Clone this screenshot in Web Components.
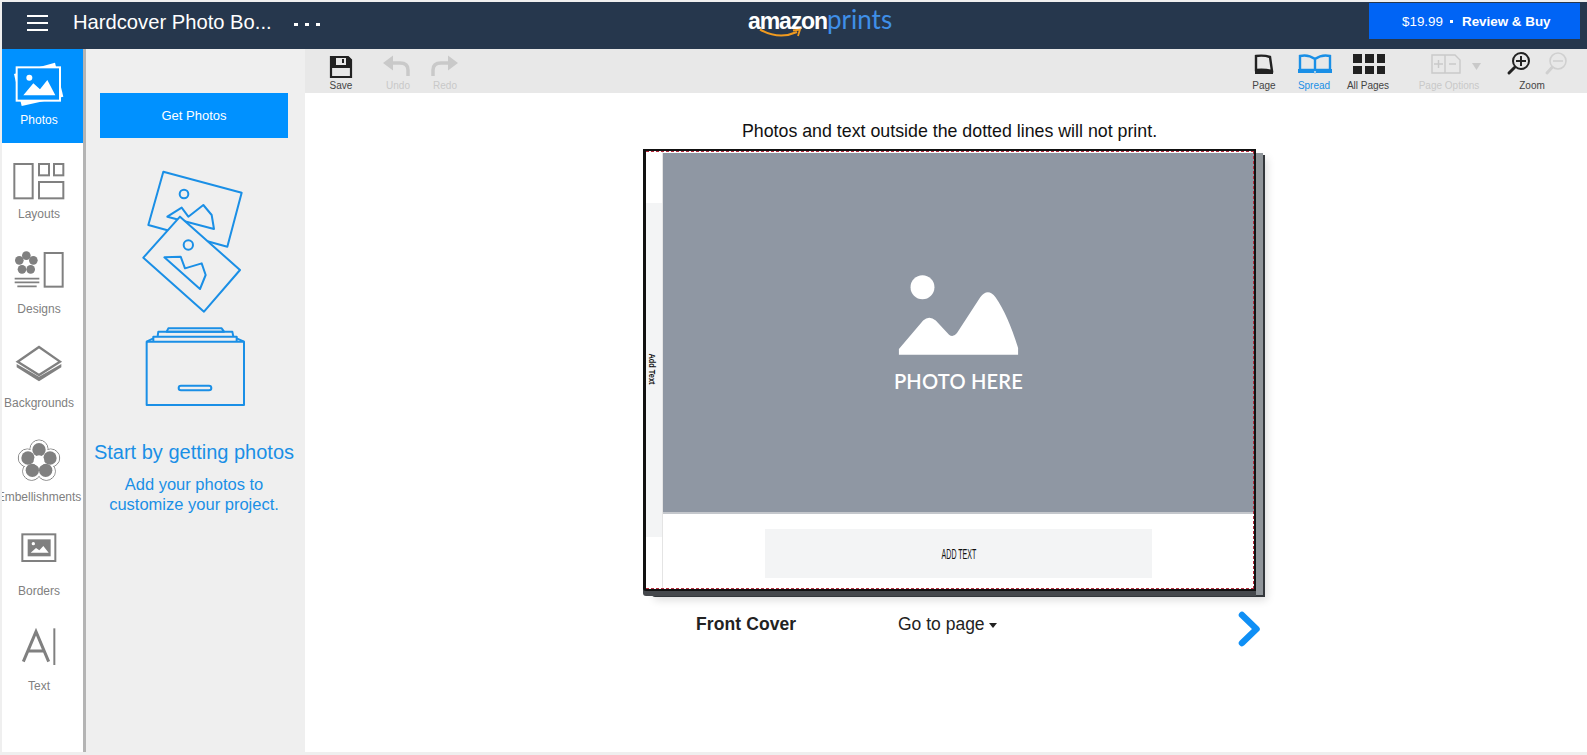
<!DOCTYPE html>
<html>
<head>
<meta charset="utf-8">
<title>Hardcover Photo Book</title>
<style>
  html, body { margin: 0; height: 100%; }
  body { background: #efefef; font-family: "Liberation Sans", Arial, sans-serif; overflow: hidden; }
</style>
</head>
<body>
<app-root></app-root>
<script>
const FONT = '"Liberation Sans", Arial, sans-serif';

class TopBar extends HTMLElement {
    constructor() {
        super();
        this.attachShadow({ mode: 'open' }).innerHTML = `
  <style>
    :host { display: flex; align-items: center; height: 47px; background: #26374d; color: #fff; font-family: ${FONT}; }
    .left { width: 746px; display: flex; align-items: center; flex: none; padding-bottom: 6px; }
    .burger { width: 21px; margin-left: 25px; display: grid; gap: 5px; }
    .burger i { display: block; height: 2px; background: #fff; }
    .title { margin-left: 25px; font-size: 20.2px; width: 200px; white-space: nowrap; }
    .dots { margin-left: 21px; margin-top: 4px; display: flex; gap: 7px; }
    .dots i { width: 4px; height: 3px; background: #fff; }
    .logo { position: relative; display: flex; align-items: baseline; height: 47px; width: 150px; }
    .amazon { font-weight: 700; font-size: 24px; letter-spacing: -1.2px; line-height: 34px; transform: scaleX(.96); transform-origin: left; width: 79px; }
    .prints { font-family: Lato, sans-serif; font-weight: 400; font-size: 26px; letter-spacing: 0; color: #3f8fe8; line-height: 34px; }
    .smile { position: absolute; left: 11px; top: 26px; }
    .buy { margin-left: auto; margin-right: 7px; margin-top: -9px; width: 211px; height: 36px; background: #0064f5; display: flex; align-items: center; font-size: 13.4px; }
    .price { margin-left: 33px; }
    .sep { width: 3px; height: 3px; margin: 0 9px 0 7px; background: #fff; }
    .cta { font-weight: 700; }
  </style>
  <div class="left">
    <div class="burger"><i></i><i></i><i></i></div>
    <div class="title">Hardcover Photo Bo...</div>
    <div class="dots"><i></i><i></i><i></i></div>
  </div>
  <div class="logo">
    <span class="amazon">amazon</span><span class="prints">prints</span>
    <svg class="smile" width="44" height="10" viewBox="0 0 44 10"><path d="M1 1.5Q20 12 38 4" fill="none" stroke="#f09a1f" stroke-width="2"/><path d="M34 2.5L41 1.5L39 8" fill="none" stroke="#f09a1f" stroke-width="1.8"/></svg>
  </div>
  <div class="buy"><span class="price">$19.99</span><i class="sep"></i><span class="cta">Review &amp; Buy</span></div>
`;
    }
}

class NavItem extends HTMLElement {
    constructor() {
        super();
        this.attachShadow({ mode: 'open' }).innerHTML = `
  <style>
    :host { display: block; height: 94.3px; overflow: hidden; color: #808080; font-family: ${FONT}; }
    :host([active]) { background: #0091ff; color: #fff; }
    .icon { display: block; height: 64px; }
    .label { display: flex; justify-content: center; white-space: nowrap; font-size: 12px; line-height: 14px; padding-right: 7px; }
  </style>
  <div class="icon"><slot></slot></div>
  <div class="label"><span id="t"></span></div>
`;
    }

    connectedCallback() {
        this.shadowRoot.getElementById('t').textContent = this.getAttribute('label');
    }
}

class SideNav extends HTMLElement {
    constructor() {
        super();
        this.attachShadow({ mode: 'open' }).innerHTML = `
  <style>
    :host { display: block; width: 81px; flex: none; background: #fff; border-right: 3px solid #b4b4b4; }
  </style>
  <slot></slot>
`;
    }
}

class PhotoPanel extends HTMLElement {
    constructor() {
        super();
        this.attachShadow({ mode: 'open' }).innerHTML = `
  <style>
    :host { display: block; width: 219px; flex: none; background: #efefef; color: #1a8fe6; font-family: ${FONT}; text-align: center; }
    .btn { margin: 44px 17px 0 14px; height: 45px; background: #0091ff; color: #fff; font-size: 13px; line-height: 45px; }
    svg { display: block; margin: 22px 0 0 34px; }
    h2 { margin: 20px 0 0; font-size: 20px; font-weight: 400; line-height: 24px; padding-right: 3px; }
    p { margin: 10px 0 0; font-size: 16.5px; line-height: 20px; padding-right: 3px; white-space: nowrap; }
  </style>
  <div class="btn">Get Photos</div>
  <svg width="150" height="260" viewBox="0 0 450 780" fill="none" stroke="#1a8fe6" stroke-width="6" stroke-linejoin="round">
    <path d="M130 35L365 98L322 260L85 195Z"/>
    <circle cx="192" cy="102" r="13"/>
    <path d="M142 170L185 143L205 170L250 135L275 165L282 207Z"/>
    <path d="M180 170L360 330L252 455L70 293Z" fill="#efefef"/>
    <circle cx="205" cy="255" r="14"/>
    <path d="M133 292L182 290L195 325L245 310L257 345L240 387Z"/>
    <path d="M145 505H305L312 515H140Z"/>
    <path d="M113 528L115 515H337L340 530"/>
    <path d="M100 544V530H350V544"/>
    <path d="M80 545L100 535M372 545L350 535"/>
    <rect x="80" y="545" width="292" height="190"/>
    <rect x="176" y="677" width="98" height="14" rx="7"/>
  </svg>
  <h2>Start by getting photos</h2>
  <p>Add your photos to<br>customize your project.</p>
`;
    }
}

class ToolItem extends HTMLElement {
    constructor() {
        super();
        this.attachShadow({ mode: 'open' }).innerHTML = `
  <style>
    :host { display: block; flex: none; color: #444; font-family: ${FONT}; text-align: center; }
    :host([tone="blue"]) { color: #1a8fe6; }
    :host([tone="off"]) { color: #c9c9c9; }
    .icon { height: 30px; }
    .label { font-size: 10px; line-height: 12px; white-space: nowrap; }
  </style>
  <div class="icon"><slot></slot></div>
  <div class="label" id="t"></div>
`;
    }

    connectedCallback() {
        this.shadowRoot.getElementById('t').textContent = this.getAttribute('label');
        this.style.width = this.getAttribute('w') + 'px';
        this.style.marginLeft = (this.getAttribute('gap') || 0) + 'px';
    }
}

class ToolBar extends HTMLElement {
    constructor() {
        super();
        this.attachShadow({ mode: 'open' }).innerHTML = `
  <style>
    :host { display: flex; height: 44px; background: #e8e8e8; padding: 0 15px 0 16px; box-sizing: border-box; }
    .spacer { flex: 1; }
    .group { display: flex; padding-top: 1px; }
  </style>
  <div class="group"><slot name="left"></slot></div>
  <div class="spacer"></div>
  <div class="group"><slot name="right"></slot></div>
`;
    }
}

class BookCanvas extends HTMLElement {
    constructor() {
        super();
        this.attachShadow({ mode: 'open' }).innerHTML = `
  <style>
    :host { display: block; width: 613px; font-family: ${FONT}; color: #111; }
    .hint { font-size: 17.8px; line-height: 20px; text-align: center; white-space: nowrap; padding-bottom: 8px; margin-top: 28px; }
    .frame { position: relative; box-sizing: border-box; height: 442px; border: 2px solid #111; border-left-width: 3px; background: #fff; display: flex;
      border-bottom-left-radius: 3px;
      box-shadow: 0 5px 0 #45484c, 7px 4px 0 #8f9499, 9px 6px 0 #33373b, 11px 9px 8px rgba(0,0,0,.14); }
    .spine { width: 16px; flex: none; border-right: 1px solid #e4e4e4; padding-top: 52px; }
    .spine div { height: 334px; background: #f3f4f5; display: flex; align-items: center; justify-content: center; }
    .spine span { writing-mode: vertical-rl; font-size: 9.5px; font-weight: 700; transform: scaleY(.78); margin: -2px 4px 0 0; white-space: nowrap; }
    .body { flex: 1; }
    .photo { margin-top: 2px; height: 359px; background: #8f97a3; border-bottom: 2px solid #c4c7cc; display: flex; flex-direction: column; align-items: center; color: #fff; }
    .photo svg { margin-top: 121px; display: block; }
    .photo b { font-family: Lato, sans-serif; font-weight: 600; font-size: 20.1px; line-height: 24px; letter-spacing: .2px; margin-top: 12px; }
    .addtext { margin: 15px 0 0 102px; width: 387px; height: 49px; background: #f3f4f5; display: flex; align-items: center; justify-content: center; }
    .addtext span { font-size: 15px; transform: scaleX(.47); white-space: nowrap; }
    .safe { position: absolute; inset: 0; border: 1px dashed #b52a3c; border-left: 0; pointer-events: none; }
    .nav { position: relative; display: flex; align-items: center; height: 20px; margin-top: 23px; padding-left: 53px; font-size: 17.5px; color: #222; }
    .cover { font-weight: 700; width: 203px; white-space: nowrap; letter-spacing: .1px; }
    .goto { white-space: nowrap; font-size: 17.5px; margin-left: -1px; }
    .caret { display: inline-block; margin-left: 4px; vertical-align: 2px; border: 4.5px solid transparent; border-top: 5px solid #222; border-bottom: 0; }
    .next { position: absolute; left: 594px; top: -5px; }
  </style>
  <div class="hint">Photos and text outside the dotted lines will not print.</div>
  <div class="frame">
    <div class="spine"><div><span>Add Text</span></div></div>
    <div class="body">
      <div class="photo">
        <svg width="124" height="83" viewBox="112 72 372 250" fill="#fff">
          <circle cx="188" cy="112" r="36"/>
          <path d="M117 298L190 212Q208 195 228 212L268 255Q280 265 292 250L362 142Q385 112 408 142Q445 195 476 295V315H117Z"/>
        </svg>
        <b>PHOTO HERE</b>
      </div>
      <div class="addtext"><span>ADD TEXT</span></div>
    </div>
    <div class="safe"></div>
  </div>
  <div class="nav">
    <span class="cover">Front Cover</span>
    <span class="goto">Go to page<i class="caret"></i></span>
    <svg class="next" width="26" height="40" viewBox="0 0 26 40"><path d="M5 6L19.500 20L5 34" fill="none" stroke="#0f8ff5" stroke-width="6.500" stroke-linecap="round" stroke-linejoin="round"/></svg>
  </div>
`;
    }
}

class AppRoot extends HTMLElement {
    constructor() {
        super();
        this.attachShadow({ mode: 'open' }).innerHTML = `
  <style>
    :host { display: flex; flex-direction: column; height: 750px; padding: 2px 0 3px 2px; box-sizing: content-box; }
    top-bar { flex: none; }
    .row { flex: 1; display: flex; min-height: 0; }
    .right { flex: 1; display: flex; flex-direction: column; background: #fff; min-width: 0; }
    .main { flex: 1; padding-left: 338px; }
    svg { display: block; }
    .g { fill: none; stroke: #808080; stroke-width: 6; }
    .f { fill: #808080; }
  </style>
  <top-bar></top-bar>
  <div class="row">
    <side-nav>
      <nav-item label="Photos" active>
        <svg width="81" height="64" viewBox="6 147 243 192">
          <path d="M42 222L165 188L190 290L65 318Z" fill="#fff"/>
          <rect x="50" y="202" width="130" height="100" fill="#0091ff" stroke="#fff" stroke-width="6"/>
          <circle cx="88" cy="233" r="9" fill="#fff"/>
          <path d="M70 286L100 250L120 268L142 240L166 286Z" fill="#fff"/>
        </svg>
      </nav-item>
      <nav-item label="Layouts">
        <svg width="81" height="64" viewBox="6 430 243 192">
          <g class="g">
            <rect x="43" y="493" width="55" height="103"/>
            <rect x="117" y="493" width="30" height="34"/>
            <rect x="162" y="493" width="28" height="34"/>
            <rect x="117" y="547" width="73" height="49"/>
          </g>
        </svg>
      </nav-item>
      <nav-item label="Designs">
        <svg width="81" height="64" viewBox="6 -7 243 192">
          <g class="f">
            <circle cx="79" cy="46" r="13"/><circle cx="58" cy="60" r="13"/><circle cx="100" cy="60" r="13"/>
            <circle cx="66" cy="87" r="13"/><circle cx="92" cy="87" r="13"/>
          </g>
          <circle cx="79" cy="69" r="6" fill="#fff"/>
          <path d="M44 115H118M44 126H118M52 138H110" class="g" style="stroke-width:5"/>
          <rect x="134" y="38" width="54" height="101" class="g"/>
        </svg>
      </nav-item>
      <nav-item label="Backgrounds">
        <svg width="81" height="64" viewBox="6 276 243 192">
          <path d="M50 372L117 410L184 372V382L117 424L50 382Z" class="f"/>
          <path d="M117 321L180 365L117 405L53 365Z" class="g" style="fill:#fff;stroke-width:7"/>
        </svg>
      </nav-item>
      <nav-item label="Embellishments">
        <svg width="81" height="64" viewBox="6 559 243 192">
          <g fill="#fff" stroke="#808080" stroke-width="3">
            <circle cx="117" cy="628" r="27"/><circle cx="152" cy="655" r="27"/><circle cx="139" cy="695" r="27"/>
            <circle cx="95" cy="695" r="27"/><circle cx="82" cy="655" r="27"/>
          </g>
          <g fill="#fff">
            <circle cx="117" cy="663" r="34"/>
            <circle cx="117" cy="628" r="25.500"/><circle cx="152" cy="655" r="25.500"/><circle cx="139" cy="695" r="25.500"/>
            <circle cx="95" cy="695" r="25.500"/><circle cx="82" cy="655" r="25.500"/>
          </g>
          <g class="f">
            <circle cx="117" cy="630" r="20"/><circle cx="150" cy="655" r="20"/><circle cx="137" cy="692" r="20"/>
            <circle cx="97" cy="692" r="20"/><circle cx="84" cy="655" r="20"/>
          </g>
          <circle cx="117" cy="663" r="16" fill="#fff"/>
        </svg>
      </nav-item>
      <nav-item label="Borders">
        <svg width="81" height="64" viewBox="6 62 243 192">
          <rect x="67" y="105" width="99" height="80" class="g"/>
          <rect x="83" y="120" width="69" height="51" class="f"/>
          <circle cx="100" cy="133" r="5" fill="#fff"/>
          <path d="M92 160L108 146L118 153L130 140L146 160Z" fill="#fff"/>
        </svg>
      </nav-item>
      <nav-item label="Text">
        <svg width="81" height="64" viewBox="6 345 243 192">
          <path d="M70 485L108 395L146 485M84 453H132" class="g" style="stroke-width:9"/>
          <path d="M163 385V495" class="g"/>
        </svg>
      </nav-item>
    </side-nav>
    <photo-panel></photo-panel>
    <div class="right">
      <tool-bar>
        <tool-item slot="left" label="Save" w="40">
          <svg width="40" height="30" viewBox="321 48 40 30">
            <path d="M331 55H348L351 58V75H331Z" fill="none" stroke="#222" stroke-width="2.200"/>
            <path d="M331 55H349L351 58V66H331Z" fill="#222"/>
            <rect x="336" y="56" width="10" height="7" fill="#e8e8e8"/>
            <rect x="342" y="57" width="2" height="4" fill="#222"/>
          </svg>
        </tool-item>
        <tool-item slot="left" label="Undo" w="40" gap="17" tone="off">
          <svg width="40" height="30" viewBox="378 49 40 30">
            <path d="M408 75V69Q408 62 400 62H386" fill="none" stroke="#c9c9c9" stroke-width="3.500"/>
            <path d="M383 62L393 54.500V69.500Z" fill="#c9c9c9"/>
          </svg>
        </tool-item>
        <tool-item slot="left" label="Redo" w="40" gap="7" tone="off">
          <svg width="40" height="30" viewBox="425 49 40 30">
            <path d="M433 75V69Q433 62 441 62H455" fill="none" stroke="#c9c9c9" stroke-width="3.500"/>
            <path d="M458 62L448 54.500V69.500Z" fill="#c9c9c9"/>
          </svg>
        </tool-item>
        <tool-item slot="right" label="Page" w="40">
          <svg width="40" height="30" viewBox="1244 49 40 30">
            <path d="M1256 55Q1264 54 1270 56L1272 70Q1264 68 1256 69Z" fill="none" stroke="#222" stroke-width="2.400"/>
            <path d="M1255 69Q1264 67 1273 71V73H1255Z" fill="#222"/>
          </svg>
        </tool-item>
        <tool-item slot="right" label="Spread" w="40" gap="10" tone="blue">
          <svg width="40" height="30" viewBox="1294 49 40 30">
            <path d="M1315 58Q1308 53 1300 55V69H1315ZM1315 58Q1322 53 1330 55V69H1315Z" fill="none" stroke="#1a8fe6" stroke-width="2.400"/>
            <path d="M1298 68H1313L1315 73L1317 68H1332V72H1298Z" fill="#1a8fe6"/>
          </svg>
        </tool-item>
        <tool-item slot="right" label="All Pages" w="60" gap="4">
          <svg width="60" height="30" viewBox="1338 49 60 30" fill="#222">
            <rect x="1353" y="53" width="9" height="9"/><rect x="1365" y="53" width="9" height="9"/><rect x="1377" y="53" width="8" height="9"/>
            <rect x="1353" y="65" width="9" height="8"/><rect x="1365" y="65" width="9" height="8"/><rect x="1377" y="65" width="8" height="8"/>
          </svg>
        </tool-item>
        <tool-item slot="right" label="Page Options" w="70" gap="16" tone="off">
          <svg width="70" height="30" viewBox="1414 49 70 30" fill="none" stroke="#c9c9c9" stroke-width="1.400">
            <path d="M1432 54H1445V72H1432ZM1445 54H1455L1460 59V72H1445Z"/>
            <path d="M1434 63H1443M1438.500 59V67M1449 63H1456"/>
            <path d="M1472 62H1481L1476.500 69Z" fill="#c9c9c9" stroke="none"/>
          </svg>
        </tool-item>
        <tool-item slot="right" label="Zoom" w="80" gap="8">
          <svg width="80" height="30" viewBox="1492 49 80 30" fill="none">
            <g stroke="#222">
              <circle cx="1521" cy="60" r="8" stroke-width="2"/>
              <path d="M1516 60H1526M1521 55V65" stroke-width="2"/>
              <path d="M1514.500 66.500L1509 72" stroke-width="3" stroke-linecap="round"/>
            </g>
            <g stroke="#d0d0d0">
              <circle cx="1558" cy="60" r="8" stroke-width="1.600"/>
              <path d="M1553 60H1563" stroke-width="1.600"/>
              <path d="M1552 66.500L1547 72" stroke-width="3" stroke-linecap="round"/>
            </g>
          </svg>
        </tool-item>
      </tool-bar>
      <div class="main"><book-canvas></book-canvas></div>
    </div>
  </div>
`;
    }
}

customElements.define('top-bar', TopBar);
customElements.define('nav-item', NavItem);
customElements.define('side-nav', SideNav);
customElements.define('photo-panel', PhotoPanel);
customElements.define('tool-item', ToolItem);
customElements.define('tool-bar', ToolBar);
customElements.define('book-canvas', BookCanvas);
customElements.define('app-root', AppRoot);
</script>
</body>
</html>
